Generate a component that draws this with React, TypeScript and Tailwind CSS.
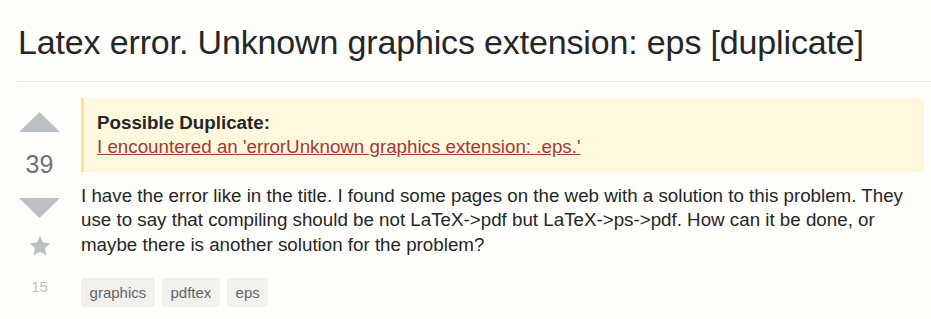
import React from "react";

export default function App() {
  return (
    <div className="w-[931px] h-[319px] bg-[#fffefb] overflow-hidden" style={{ fontFamily: '"Liberation Sans", Arial, sans-serif' }}>
      <div className="pl-[17px]">
        <h1 className="pt-[22px] pl-[1px] text-[34px] leading-[40px] tracking-[-0.15px] text-[#242729] h-[81px]">
          Latex error. Unknown graphics extension: eps [duplicate]
        </h1>
        <div className="h-px bg-[#e4e6e8]" />
        <div className="flex pt-[16px]">
          <div className="w-[45px] flex flex-col items-center pt-[14px] shrink-0">
            <svg width="41" height="20" viewBox="0 0 41 20">
              <path d="M0 20 L20.5 0 L41 20 Z" fill="#bbc0c4" />
            </svg>
            <div className="text-[25px] leading-[30px] text-[#6a737c] mt-[17px]">39</div>
            <svg width="41" height="20" viewBox="0 0 41 20" className="mt-[19px]">
              <path d="M0 0 L41 0 L20.5 20 Z" fill="#bbc0c4" />
            </svg>
            <svg width="24" height="23" viewBox="0 0 24 24" className="mt-[16px]">
              <path d="M12 1.5l3.2 7.3 7.8.7-5.9 5.2 1.8 7.8L12 18.4l-6.9 4.1 1.8-7.8L1 9.5l7.8-.7z" fill="#bbc0c4" />
            </svg>
            <div className="text-[15px] leading-[18px] text-[#bbc0c4] mt-[21px]">15</div>
          </div>
          <div className="ml-[19px] w-[843px]">
            <div className="bg-[#fff8dc] border-l-[3px] border-[#ffe28a] pl-[13px] pt-[12.5px] pb-[12.5px]">
              <div className="font-bold text-[18.75px] leading-[24.4px] text-[#242729]">Possible Duplicate:</div>
              <a href="#" className="text-[18.75px] leading-[24.4px] text-[#9e3a3a] underline">
                I encountered an 'errorUnknown graphics extension: .eps.'
              </a>
            </div>
            <p className="mt-[11.5px] pr-[4px] text-[18.75px] leading-[24.4px] text-[#242729]">
              I have the error like in the title. I found some pages on the web with a solution to this problem. They use to say that compiling should be not LaTeX-&gt;pdf but LaTeX-&gt;ps-&gt;pdf. How can it be done, or maybe there is another solution for the problem?
            </p>
            <div className="flex gap-[7px] mt-[20.5px]">
              {["graphics", "pdftex", "eps"].map((t) => (
                <span key={t} className="bg-[#f3f1eb] text-[#5f666d] text-[15px] leading-[19px] px-[8.6px] py-[5px] rounded-[4px]">
                  {t}
                </span>
              ))}
            </div>
          </div>
        </div>
      </div>
    </div>
  );
}
